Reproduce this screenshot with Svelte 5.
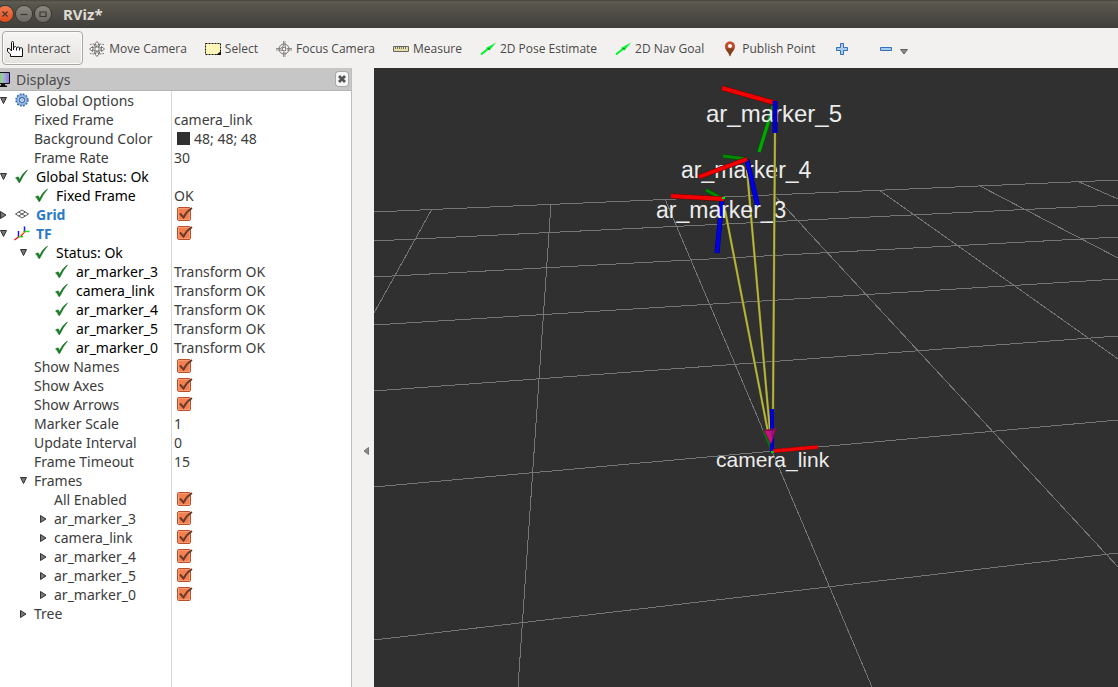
<script>
  const tools = [
    { icon: 'hand', label: 'Interact', active: true },
    { icon: 'move', label: 'Move Camera' },
    { icon: 'select', label: 'Select' },
    { icon: 'focus', label: 'Focus Camera' },
    { icon: 'ruler', label: 'Measure' },
    { icon: 'arrow', label: '2D Pose Estimate' },
    { icon: 'arrow', label: '2D Nav Goal' },
    { icon: 'pin', label: 'Publish Point' }
  ];

  let rows = $state([
    { level: 0, arrow: 'open', icon: 'gear', name: 'Global Options' },
    { level: 1, name: 'Fixed Frame', value: 'camera_link' },
    { level: 1, name: 'Background Color', value: '48; 48; 48', swatch: true },
    { level: 1, name: 'Frame Rate', value: '30' },
    { level: 0, arrow: 'open', icon: 'check', name: 'Global Status: Ok', kind: 'status' },
    { level: 1, icon: 'check', name: 'Fixed Frame', kind: 'status', value: 'OK' },
    { level: 0, arrow: 'closed', icon: 'grid', name: 'Grid', kind: 'display', checked: true },
    { level: 0, arrow: 'open', icon: 'axes', name: 'TF', kind: 'display', checked: true },
    { level: 1, arrow: 'open', icon: 'check', name: 'Status: Ok', kind: 'status' },
    { level: 2, icon: 'check', name: 'ar_marker_3', kind: 'status', value: 'Transform OK' },
    { level: 2, icon: 'check', name: 'camera_link', kind: 'status', value: 'Transform OK' },
    { level: 2, icon: 'check', name: 'ar_marker_4', kind: 'status', value: 'Transform OK' },
    { level: 2, icon: 'check', name: 'ar_marker_5', kind: 'status', value: 'Transform OK' },
    { level: 2, icon: 'check', name: 'ar_marker_0', kind: 'status', value: 'Transform OK' },
    { level: 1, name: 'Show Names', checked: true },
    { level: 1, name: 'Show Axes', checked: true },
    { level: 1, name: 'Show Arrows', checked: true },
    { level: 1, name: 'Marker Scale', value: '1' },
    { level: 1, name: 'Update Interval', value: '0' },
    { level: 1, name: 'Frame Timeout', value: '15' },
    { level: 1, arrow: 'open', name: 'Frames' },
    { level: 2, name: 'All Enabled', checked: true },
    { level: 2, arrow: 'closed', name: 'ar_marker_3', checked: true },
    { level: 2, arrow: 'closed', name: 'camera_link', checked: true },
    { level: 2, arrow: 'closed', name: 'ar_marker_4', checked: true },
    { level: 2, arrow: 'closed', name: 'ar_marker_5', checked: true },
    { level: 2, arrow: 'closed', name: 'ar_marker_0', checked: true },
    { level: 1, arrow: 'closed', name: 'Tree' }
  ]);

  // Ground plane lines: [x1, y1, x2, y2]
  const ground = [
    [374, 212, 1118, 180], [374, 241, 1118, 205], [374, 277, 1118, 237],
    [374, 325, 1118, 279], [374, 391, 1118, 336], [374, 487, 1118, 420],
    [374, 640, 1118, 553],
    [432, 209, 374, 313], [551, 204, 518, 687], [665, 199, 872, 687],
    [774, 195, 1118, 567], [879, 190, 1118, 359], [980, 186, 1118, 258],
    [1077, 181, 1118, 199]
  ];
</script>

{#snippet glyph(name)}
  <svg class="icon" viewBox="0 0 16 16" width="16" height="16" aria-hidden="true">
    {#if name === 'hand'}
      <path d="M4.5 10V1.5Q4.5.5 5.5.5T6.500 1.500V6.500Q9 4.500 9.500 6.500Q12 5 12.500 7Q15.500 6 15.500 8V15.500H3.500V13L.5 10.500V7.500Q2.500 6.500 4.500 10Z" fill="#fff" stroke="#111" />
      <path d="M6.500 5V9M9.500 7V9.500M12.500 7V9.500" stroke="#111" fill="none" />
    {:else if name === 'move'}
      <g fill="#f8f8f8" stroke="#555" stroke-width=".8">
        <path d="M1 3.500 5 3 6 6M15 3.500 11 3 10 6M1 12.500 5 13 6 10M15 12.500 11 13 10 10" fill="none" stroke-dasharray="1.500 1" />
        <path d="M8 .5 10.500 3.500H9V7H12.500V5.500L15.500 8 12.500 10.500V9H9V12.500H10.500L8 15.500 5.500 12.500H7V9H3.500V10.500L.5 8 3.500 5.500V7H7V3.500H5.500Z" />
        <ellipse cx="8" cy="8" rx="4.500" ry="2.500" fill="none" stroke-dasharray="1.500 1" />
      </g>
    {:else if name === 'select'}
      <path d="M.5 2.500H15.500V13.500H.5Z" fill="#fff6b8" stroke="#111" stroke-dasharray="2 1" />
      <path d="M16 10V14H11Z" fill="#111" />
    {:else if name === 'focus'}
      <g fill="none" stroke="#777">
        <circle cx="8" cy="8" r="5" />
        <path d="M7.500 0V5M9 0V5M7.500 11V16M9 11V16M0 7.500H5M0 9H5M11 7.500H16M11 9H16" stroke-width=".8" />
        <path d="M5 6.500H11M5 9.500H11M6.500 5V11M9.500 5V11" stroke-width=".8" stroke-dasharray="1 1" />
        <circle cx="8" cy="8" r="2" />
      </g>
    {:else if name === 'ruler'}
      <path d="M.5 5.500H15.500V10.500H.5Z" fill="#e6dfa6" stroke="#666" />
      <path d="M2.500 6V8M4.500 6V8M6.500 6V8M8.500 6V8M10.500 6V8M12.500 6V8" stroke="#777" />
    {:else if name === 'arrow'}
      <path d="M1 13.500 9 7" stroke="#05f52e" stroke-width="2.200" />
      <path d="M16 1.500 6 7 9.500 9.500Z" fill="#0cf234" />
      <path d="M7 7.500 9.500 9 9.500 7Z" fill="#087b1d" />
    {:else if name === 'pin'}
      <path d="M8 .5C4.500.5 3 3 3 5.500 3 9 6.500 11 8 15.500 9.500 11 13 9 13 5.500 13 3 11.500.5 8 .5Z" fill="#c44c2c" />
      <path d="M3.500 7.500C5 10.500 7 12 8 15.500 9 12 11 10.500 12.500 7.500Z" fill="#81401f" />
      <circle cx="8" cy="5" r="2" fill="#fff" />
    {:else if name === 'plus'}
      <path d="M6.500 2.500H9.500V6.500H13.500V9.500H9.500V13.500H6.500V9.500H2.500V6.500H6.500Z" fill="#a8ccee" stroke="#356fb4" />
    {:else if name === 'minus'}
      <path d="M2.500 6.500H13.500V9.500H2.500Z" fill="#a8ccee" stroke="#356fb4" />
    {:else if name === 'gear'}
      <circle cx="8" cy="7" r="5.800" fill="#8fb2dc" stroke="#3c6dab" stroke-width="1.800" stroke-dasharray="1.800 1.240" />
      <circle cx="8" cy="7" r="4.800" fill="#9fc0e6" stroke="#7ba4d6" stroke-width=".8" />
      <circle cx="8" cy="7" r="2.500" fill="#fff" stroke="#4678b5" stroke-width="1.300" />
      <circle cx="8" cy="7" r=".8" fill="#4678b5" />
    {:else if name === 'check'}
      <path d="M1.500 9Q3 7.500 4.500 8L5.500 10.500Q9 3.500 13.500 1 9 6.500 6 13Q5 14.500 4.500 13Q3.500 10 1.500 9Z" fill="#1b7a26" stroke="#1b7a26" stroke-width=".6" />
    {:else if name === 'grid'}
      <g fill="none" stroke="#444" stroke-width=".9">
        <path d="M8 3 14.500 7 8 11 1.500 7ZM4.750 5 11.250 9M11.250 5 4.750 9" />
      </g>
    {:else if name === 'axes'}
      <g fill="none" stroke-width="1.500">
        <path d="M10.500 5.500V.5M4.500 11V5" stroke="#1717f5" />
        <path d="M10.500 5.500 15.500 5.500" stroke="#12e512" />
        <path d="M4.500 11 9 10.500" stroke="#12e512" />
        <path d="M10.500 5.500 7 10M4.500 11 .5 14" stroke="#f01414" />
        <path d="M5 10.500 10 6" stroke="#e7d51e" stroke-width="1" />
      </g>
    {/if}
  </svg>
{/snippet}

{#snippet axis(x1, y1, x2, y2, color, dark, w)}
  <line {x1} {y1} {x2} {y2} stroke={dark} stroke-width={w + 1} />
  <line {x1} {y1} {x2} {y2} stroke={color} stroke-width={w} />
{/snippet}

{#snippet arrowShaft(x1, y1, x2, y2)}
  <line {x1} {y1} {x2} {y2} stroke="#77772a" stroke-width="2.4" />
  <line {x1} {y1} {x2} {y2} stroke="#b8b83c" stroke-width="1.6" />
{/snippet}

<div class="window">
  <header class="titlebar">
    <button class="ctl close" aria-label="Close"><svg viewBox="0 0 16 16"><path d="M5.500 5.500 10.500 10.500M10.500 5.500 5.500 10.500" /></svg></button>
    <button class="ctl" aria-label="Minimize"><svg viewBox="0 0 16 16"><path d="M4.500 8.500H11.500" /></svg></button>
    <button class="ctl" aria-label="Maximize"><svg viewBox="0 0 16 16"><path d="M5 6H11V10.500H5Z" /></svg></button>
    <h1>RViz*</h1>
  </header>

  <nav class="toolbar">
    {#each tools as tool}
      <button class="tool" class:active={tool.active}>
        {@render glyph(tool.icon)}<span>{tool.label}</span>
      </button>
    {/each}
    <button class="tool" aria-label="Add tool">{@render glyph('plus')}</button>
    <button class="tool remove" aria-label="Remove tool">
      {@render glyph('minus')}
      <svg class="drop" viewBox="0 0 8 6" width="8" height="6" aria-hidden="true"><path d="M.5.5H7.500L4 5Z" fill="#888" stroke="#666" /></svg>
    </button>
  </nav>

  <main>
    <section class="panel">
      <div class="panel-head">
        <svg width="10" height="16" viewBox="0 0 10 16" aria-hidden="true">
          <defs><linearGradient id="screen"><stop offset="0" stop-color="#63b563" /><stop offset=".4" stop-color="#9ad39a" /><stop offset=".6" stop-color="#a9a2e4" /><stop offset="1" stop-color="#8b80d4" /></linearGradient></defs>
          <path d="M-3 1.500H9.500V12.500H-3Z" fill="url(#screen)" stroke="#111" />
          <path d="M1 13H5V14.500H7V16H0V14.500H1Z" fill="#111" />
        </svg>
        <h2>Displays</h2>
        <button class="panel-close" aria-label="Close panel"><svg viewBox="0 0 8 8" width="8" height="8"><path d="M1 1 7 7M7 1 1 7" stroke="#555" stroke-width="2.800" /></svg></button>
      </div>
      <div class="tree">
        <table>
          <tbody>
            {#each rows as row, i}
              <tr class={row.kind}>
                <th scope="row">
                  <div class="name" style="padding-left: {row.level * 20}px">
                    <span class="twist">
                      {#if row.arrow}
                        <svg width="8" height="8" viewBox="0 0 8 8" aria-hidden="true">
                          <path d={row.arrow === 'open' ? 'M.5.5H6.500L3.500 6.500Z' : 'M.5.5V7.500L6 4Z'} fill="#777" stroke="#333" />
                        </svg>
                      {/if}
                    </span>
                    {#if row.icon}<span class="row-icon">{@render glyph(row.icon)}</span>{/if}
                    {#if row.checked !== undefined}
                      <label for="prop-{i}">{row.name}</label>
                    {:else}
                      <span>{row.name}</span>
                    {/if}
                  </div>
                </th>
                <td>
                  <div class="value">
                    {#if row.checked !== undefined}
                      <input id="prop-{i}" type="checkbox" bind:checked={row.checked} />
                    {:else if row.value}
                      {#if row.swatch}<i class="swatch"></i>{/if}<span>{row.value}</span>
                    {/if}
                  </div>
                </td>
              </tr>
            {/each}
            <tr class="rest" aria-hidden="true"><th></th><td></td></tr>
          </tbody>
        </table>
      </div>
    </section>

    <div class="splitter">
      <button aria-label="Collapse panel"><svg width="6" height="8" viewBox="0 0 6 8"><path d="M5.500.5V7.500L1 4Z" fill="#888" stroke="#777" /></svg></button>
    </div>

    <section class="view">
      <svg viewBox="374 68 744 619" preserveAspectRatio="xMidYMid slice" role="img" aria-label="3D view">
        <g stroke="#757575" stroke-width="1" shape-rendering="crispEdges">
          {#each ground as [x1, y1, x2, y2]}<line {x1} {y1} {x2} {y2} />{/each}
        </g>

        <text x="681" y="178" font-size="23">ar_marker_4</text>

        {@render arrowShaft(725, 210, 768, 432)}
        {@render arrowShaft(747, 170, 770, 432)}

        {@render axis(746, 159, 723, 156, '#008a00', '#004a00', 3)}
        {@render axis(747, 160, 758, 207, '#0000e6', '#00006a', 4)}
        {@render axis(747, 159, 699, 177, '#f00000', '#700000', 4)}

        {@render axis(723, 199, 706, 190, '#008a00', '#004a00', 3)}
        {@render axis(722, 200, 717, 253, '#0000e6', '#00006a', 4)}
        {@render axis(724, 199, 671, 196, '#f00000', '#700000', 4)}
        <rect x="722" y="197" width="3" height="2" fill="#0e0" />

        {@render axis(774, 104, 759, 152, '#00a800', '#006400', 3)}
        <text x="706" y="122" font-size="24">ar_marker_5</text>
        <text x="656" y="218" font-size="23">ar_marker_3</text>
        {@render arrowShaft(775, 130, 773, 412)}
        {@render axis(775, 103, 722, 88, '#f00000', '#700000', 4)}
        {@render axis(775, 101, 775, 133, '#0000c8', '#000088', 4)}

        <line x1="772" y1="451" x2="763" y2="430" stroke="#007a00" stroke-width="2" />
        {@render axis(772, 409, 772, 452, '#0000d8', '#0000a0', 3)}
        <path d="M763 430 777 428 771 444Z" fill="#7d1150" />
        <path d="M765 431H774L771 444Z" fill="#c8127c" />
        <path d="M772 430V437" stroke="#5c1098" />
        {@render axis(773, 451, 818, 447, '#f00000', '#a00000', 3)}
        <rect x="771" y="451" width="3" height="2" fill="#0c0" />
        <text x="716" y="467" font-size="21">camera_link</text>
      </svg>
    </section>
  </main>
</div>

<style>
  :global(body) { margin: 0; }
  .window {
    display: flex; flex-direction: column; min-height: 100vh;
    background: #f2f1ef; color: #3c3c3c;
    font-family: "Noto Sans", "Open Sans", sans-serif; font-size: 14px;
  }
  button { font: inherit; color: inherit; border: 0; padding: 0; background: none; }
  svg { display: block; flex: none; }
  h1, h2 { margin: 0; }

  .titlebar {
    display: flex; align-items: center; gap: 3px; height: 28px; overflow: hidden;
    background: linear-gradient(#47453e 0, #615d53 2px, #59564d 4px, #3f3e39 100%);
  }
  .titlebar h1 { font-size: 15px; line-height: 20px; color: #dfdbd2; padding: 0 0 0 9px; }
  .ctl {
    width: 16px; height: 16px; border-radius: 50%; flex: none;
    background: linear-gradient(#8a877f, #6b6962); box-shadow: 0 0 0 1px #383630;
  }
  .ctl svg { width: 16px; height: 16px; fill: none; stroke: #3a3833; stroke-width: 1.2; }
  .close { margin-left: -3px; background: linear-gradient(#f37b50, #df4b1c); }

  .toolbar { display: flex; align-items: center; height: 40px; padding: 0 2px; box-sizing: border-box; }
  .tool {
    display: flex; align-items: center; gap: 4px; height: 34px; padding: 2px 8px 0 10px; flex: none;
    box-sizing: border-box; font-family: "Open Sans", sans-serif; font-size: 12px; line-height: 16px; color: #4a4a4a; white-space: nowrap;
  }
  .tool.active {
    border: 1px solid #aaa8a3; border-radius: 4px; padding: 2px 12px 0 4px; margin-right: -4px;
    background: linear-gradient(#f6f5f4, #e5e3e0); box-shadow: inset 0 0 0 1px #fbfbfa;
  }
  .remove { padding-left: 20px; gap: 6px; }
  .drop { align-self: flex-end; margin-bottom: 10px; }

  main { display: flex; flex: 1; }
  .panel { display: flex; flex-direction: column; width: 352px; flex: none; box-sizing: border-box; border-right: 1px solid #c0bfbd; background: #fff; }
  .panel-head {
    display: flex; align-items: center; gap: 6px; height: 23px; box-sizing: border-box; padding-right: 3px;
    background: #c6c6c6; border-bottom: 1px solid #b4b4b4;
  }
  .panel-head h2 { flex: 1; font-size: 14px; font-weight: 400; line-height: 20px; color: #4c4c4c; padding-top: 1px; }
  .panel-close { display: grid; place-items: center; width: 12px; height: 14px; border-radius: 3px; background: #f6f6f6; box-shadow: 0 0 0 1px #aaa; }

  .tree { flex: 1; display: flex; }
  table { width: 100%; border-collapse: collapse; table-layout: fixed; }
  tr { height: 19px; }
  tr.rest { height: auto; }
  th, td { padding: 0; text-align: left; font-weight: 400; line-height: 19px; white-space: nowrap; }
  th { width: 171px; border-right: 1px solid #d8d8d8; }
  .name, .value { display: flex; align-items: center; height: 19px; }
  .twist { width: 14px; flex: none; }
  .row-icon { padding-right: 6px; }
  .value { padding-left: 2px; }
  .status th { color: #000; }
  .display th { color: #2a7ac8; font-weight: 700; }
  .swatch { width: 13px; height: 13px; margin: 0 4px 0 3px; background: #303030; }
  input {
    appearance: none; width: 17px; height: 16px; margin: 0 0 2px 2px; border: 0; border-radius: 3px;
    background: #fff; box-shadow: inset 0 0 0 1px #aaa;
  }
  input:checked {
    box-shadow: none;
    background: url("data:image/svg+xml,%3Csvg xmlns='http://www.w3.org/2000/svg' viewBox='0 0 17 16'%3E%3Crect x='1.5' y='1.500' width='13' height='13' rx='1.500' fill='%23f47f4f' stroke='%23b9502c'/%3E%3Crect x='2.500' y='2.500' width='11' height='11' fill='none' stroke='%23fa9a72'/%3E%3Cpath d='M4 7.500 7.500 11.500Q10.500 5.500 16 2' fill='none' stroke='%23693a2a' stroke-width='2'/%3E%3C/svg%3E") center / 17px 16px no-repeat;
  }

  .splitter { display: flex; flex-direction: column; align-items: center; width: 22px; flex: none; padding-left: 6px; box-sizing: border-box; }
  .splitter::before { content: ""; flex: 62; }
  .splitter::after { content: ""; flex: 38; }

  .view { flex: 1; min-width: 0; display: flex; position: relative; background: #303030; overflow: hidden; }
  .view > svg { position: absolute; inset: 0; width: 100%; height: 100%; }
  .view text { font-family: "Liberation Sans", Arial, sans-serif; fill: #ececec; }
</style>
